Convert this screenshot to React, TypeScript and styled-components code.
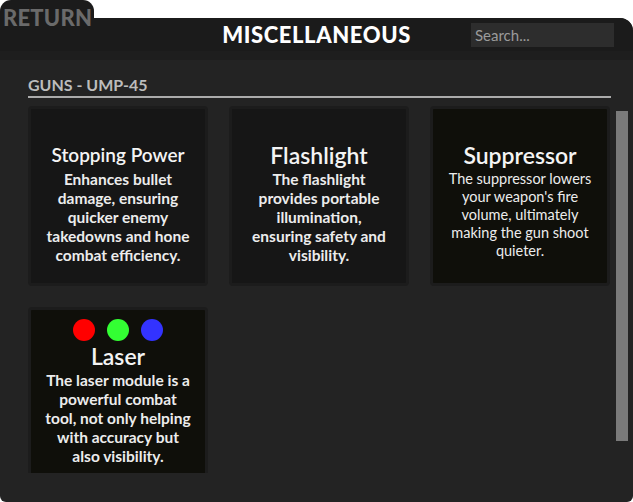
import React from "react";
import styled, { createGlobalStyle } from "styled-components";

const Global = createGlobalStyle`
  html, body { margin: 0; padding: 0; background: #ffffff; overflow: hidden; }
  * { box-sizing: border-box; }
`;

const Page = styled.div`
  position: relative;
  width: 633px;
  height: 502px;
  padding-top: 18px;
  font-family: Lato, "Noto Sans", sans-serif;
`;

const ReturnTab = styled.button`
  position: absolute;
  top: 0;
  left: 0;
  width: 94px;
  height: 33px;
  border: none;
  border-radius: 11px 11px 0 0;
  background: #1b1b1b;
  color: #6a6a6a;
  font-family: Lato, sans-serif;
  font-weight: 900;
  font-size: 22px;
  letter-spacing: 0.2px;
  padding: 3px 0 0 3px;
  text-align: left;
  line-height: 30px;
  cursor: pointer;
  z-index: 2;
`;

const Frame = styled.div`
  height: 484px;
  background: #232323;
  border-radius: 0 13px 6px 6px;
  display: flex;
  flex-direction: column;
  overflow: hidden;
`;

const Header = styled.header`
  height: 33px;
  background: #1b1b1b;
  display: grid;
  grid-template-columns: 1fr auto 1fr;
  align-items: center;
`;

const Title = styled.h1`
  grid-column: 2;
  margin: 0;
  color: #ffffff;
  font-family: Lato, sans-serif;
  font-weight: 900;
  font-size: 22px;
  letter-spacing: 0.6px;
`;

const Search = styled.input`
  grid-column: 3;
  justify-self: end;
  margin-right: 19px;
  width: 143px;
  height: 24px;
  border: none;
  outline: none;
  background: #2d2d2d;
  color: #ddd;
  font-family: Lato, sans-serif;
  font-size: 15px;
  padding: 0 4px;
  &::placeholder { color: #9b9b9b; }
`;

const Band = styled.div`
  height: 9px;
  background: #1e1e1e;
`;

const Body = styled.div`
  padding: 15px 0 0 28px;
  display: flex;
  flex-direction: column;
`;

const SectionLabel = styled.h2`
  margin: 0;
  width: 583px;
  color: #bcbcbc;
  font-family: Lato, sans-serif;
  font-weight: 700;
  font-size: 16px;
  line-height: 19px;
  padding-bottom: 2px;
  border-bottom: 2px solid #ababab;
`;

const ScrollArea = styled.div`
  margin-top: 8px;
  height: 367px;
  display: flex;
  overflow: hidden;
`;

const Grid = styled.div`
  width: 582px;
  display: grid;
  grid-template-columns: repeat(3, 180px);
  grid-auto-rows: 180px;
  gap: 21px;
  align-content: start;
`;

const ScrollThumb = styled.div`
  margin: 5px 0 0 6px;
  width: 12px;
  height: 330px;
  background: #7a7a7a;
`;

const Card = styled.div<{ $fill: string }>`
  background: ${(p) => p.$fill};
  border: 3px solid #1c1c1c;
  border-radius: 4px;
  display: flex;
  flex-direction: column;
  align-items: center;
  text-align: center;
  padding: 9px 13px 0;
  color: #f1f1f1;
`;

const Swatches = styled.div`
  display: flex;
  gap: 12px;
  height: 22px;
  margin-bottom: 2px;
`;

const Dot = styled.span<{ $c: string }>`
  width: 22px;
  height: 22px;
  border-radius: 50%;
  background: ${(p) => p.$c};
`;

const CardTitle = styled.div<{ $size: number }>`
  font-family: Lato, sans-serif;
  font-weight: 600;
  font-size: ${(p) => p.$size}px;
  line-height: 26px;
  color: #f4f4f4;
  white-space: nowrap;
`;

const CardText = styled.p<{ $weight: number; $size: number; $lh: number }>`
  margin: 2px 0 0;
  font-family: Lato, sans-serif;
  font-weight: ${(p) => p.$weight};
  font-size: ${(p) => p.$size}px;
  line-height: ${(p) => p.$lh}px;
  color: #ececec;
`;

type Item = {
  title: string;
  size: number;
  text: string;
  textSize: number;
  lineHeight: number;
  fill: string;
  weight: number;
  colors?: string[];
};

const items: Item[] = [
  {
    title: "Stopping Power",
    size: 19,
    text: "Enhances bullet damage, ensuring quicker enemy takedowns and hone combat efficiency.",
    textSize: 15.5,
    lineHeight: 19,
    fill: "#161616",
    weight: 700,
  },
  {
    title: "Flashlight",
    size: 23,
    text: "The flashlight provides portable illumination, ensuring safety and visibility.",
    textSize: 15.5,
    lineHeight: 19,
    fill: "#161616",
    weight: 700,
  },
  {
    title: "Suppressor",
    size: 23,
    text: "The suppressor lowers your weapon's fire volume, ultimately making the gun shoot quieter.",
    textSize: 14.5,
    lineHeight: 18,
    fill: "#0f0f0a",
    weight: 400,
  },
  {
    title: "Laser",
    size: 23,
    text: "The laser module is a powerful combat tool, not only helping with accuracy but also visibility.",
    textSize: 15.5,
    lineHeight: 19,
    fill: "#0f0f0a",
    weight: 700,
    colors: ["#ff0000", "#33ff33", "#3333ff"],
  },
];

export default function App() {
  return (
    <Page>
      <Global />
      <ReturnTab>RETURN</ReturnTab>
      <Frame>
        <Header>
          <Title>MISCELLANEOUS</Title>
          <Search placeholder="Search..." />
        </Header>
        <Band />
        <Body>
          <SectionLabel>GUNS - UMP-45</SectionLabel>
          <ScrollArea>
            <Grid>
              {items.map((it) => (
                <Card key={it.title} $fill={it.fill}>
                  <Swatches>
                    {it.colors?.map((c) => <Dot key={c} $c={c} />)}
                  </Swatches>
                  <CardTitle $size={it.size}>{it.title}</CardTitle>
                  <CardText $weight={it.weight} $size={it.textSize} $lh={it.lineHeight}>
                    {it.text}
                  </CardText>
                </Card>
              ))}
            </Grid>
            <ScrollThumb />
          </ScrollArea>
        </Body>
      </Frame>
    </Page>
  );
}
